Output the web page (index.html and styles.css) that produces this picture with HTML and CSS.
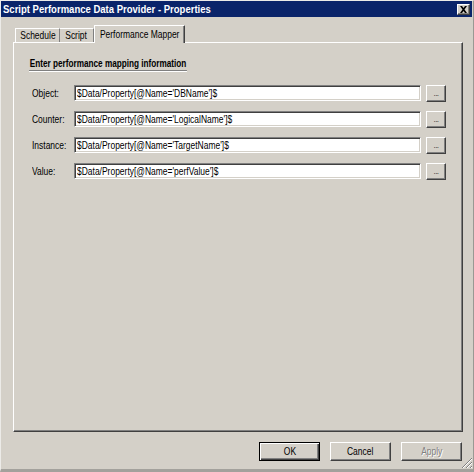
FILE: index.html
```html
<!DOCTYPE html>
<html>
<head>
<meta charset="utf-8">
<title>Script Performance Data Provider - Properties</title>
<link rel="stylesheet" href="styles.css">
</head>
<body>
<div class="window">
  <div class="titlebar">
    <span class="t title">Script Performance Data Provider - Properties</span>
    <span class="close">
      <svg width="9" height="7" viewBox="0 0 9 7"><path d="M1 0h2l1.5 2 1.5-2h2l-2.5 3.5 2.5 3.5h-2l-1.5-2-1.5 2h-2l2.5-3.5z" fill="#000"/></svg>
    </span>
  </div>
  <div class="body">
    <div class="tabs">
      <div class="tab tab-schedule"><span class="t tc">Schedule</span></div>
      <div class="tab tab-script"><span class="t tc">Script</span></div>
      <div class="tab tab-mapper active"><span class="t tc">Performance Mapper</span></div>
    </div>
    <div class="panel">
      <div class="heading-wrap"><span class="t heading">Enter performance mapping information</span></div>
      <div class="rows">
        <span class="label"><span class="t">Object:</span></span>
        <div class="input"><span class="t">$Data/Property[@Name='DBName']$</span></div>
        <div class="btn dots">...</div>

        <span class="label"><span class="t">Counter:</span></span>
        <div class="input"><span class="t">$Data/Property[@Name='LogicalName']$</span></div>
        <div class="btn dots">...</div>

        <span class="label"><span class="t">Instance:</span></span>
        <div class="input"><span class="t">$Data/Property[@Name='TargetName']$</span></div>
        <div class="btn dots">...</div>

        <span class="label"><span class="t">Value:</span></span>
        <div class="input"><span class="t">$Data/Property[@Name='perfValue']$</span></div>
        <div class="btn dots">...</div>
      </div>
    </div>
    <div class="footer">
      <div class="btn push default"><span class="t tc">OK</span></div>
      <div class="btn push"><span class="t tc">Cancel</span></div>
      <div class="btn push disabled"><span class="t tc">Apply</span></div>
    </div>
  </div>
  <svg class="grip" width="12" height="12" viewBox="0 0 12 12">
    <path d="M11 1L1 11M11 5L5 11M11 9L9 11" stroke="#808080" stroke-width="1"/>
    <path d="M11 2L2 11M11 6L6 11M11 10L10 11" stroke="#ffffff" stroke-width="1"/>
  </svg>
</div>
</body>
</html>
```

FILE: styles.css
```css
* { box-sizing: border-box; }
html, body { margin: 0; padding: 0; }
body {
  background: #D4D0C8;
  font-family: "Liberation Sans", Arial, sans-serif;
  font-size: 11px;
  color: #000;
}
.t {
  display: inline-block;
  white-space: nowrap;
  transform: scaleX(0.77);
  transform-origin: 0 50%;
}
.t.tc { transform-origin: 50% 50%; }
.window {
  position: relative;
  width: 474px;
  height: 472px;
  background: #D4D0C8;
  border-top: 1px solid #ecebe8;
  border-left: 1px solid #ecebe8;
  border-right: 1px solid #9a9893;
  border-bottom: 3px solid #a3a19c;
  display: flex;
  flex-direction: column;
}
.titlebar {
  height: 16px;
  margin-right: 1px;
  background: #0A246A;
  display: flex;
  align-items: center;
  justify-content: space-between;
  padding: 0 2px 0 2px;
}
.title {
  color: #fff;
  font-weight: bold;
  line-height: 16px;
  transform: scaleX(0.865);
}
.close {
  width: 13px;
  height: 11px;
  background: #D4D0C8;
  border: 1px solid;
  border-color: #fff #404040 #404040 #fff;
  box-shadow: inset -1px -1px 0 #808080;
  display: flex;
  align-items: center;
  justify-content: center;
}
.close svg { display: block; }
.body {
  flex: 1;
  display: flex;
  flex-direction: column;
  padding: 8px 10px 8px 12px;
}
.tabs {
  height: 17px;
  display: flex;
  align-items: flex-end;
  padding-left: 2px;
}
.tab {
  height: 14px;
  line-height: 13px;
  display: flex;
  justify-content: center;
  border-top: 1px solid #fff;
  border-right: 1px solid #808080;
}
.tab-schedule { width: 45px; border-left: 1px solid #fff; }
.tab-script { width: 34px; }
.tab.active {
  position: relative;
  z-index: 1;
  width: 91px;
  height: 18px;
  margin-bottom: -1px;
  padding-top: 2px;
  border-left: 1px solid #fff;
  border-right: 1px solid #404040;
  box-shadow: inset -1px 0 0 #808080;
  background: #D4D0C8;
}
.panel {
  flex: 1;
  border: 1px solid;
  border-color: #fff #404040 #404040 #fff;
  box-shadow: inset -1px -1px 0 #808080;
  padding: 13px 16px 0 16px;
}
.heading-wrap { height: 16px; }
.heading {
  font-weight: bold;
  line-height: 14px;
  border-bottom: 1px solid #808080;
  box-shadow: 0 1px 0 #fff;
  padding: 0 1px;
  margin-left: -1px;
  transform: scaleX(0.745);
}
.rows {
  margin-top: 13px;
  display: grid;
  grid-template-columns: 39px 347px 20px;
  column-gap: 5px;
  row-gap: 9px;
  align-items: center;
}
.label {
  padding-left: 2px;
  line-height: 17px;
  white-space: nowrap;
}
.input {
  height: 16px;
  background: #fff;
  border: 1px solid;
  border-color: #808080 #fff #fff #808080;
  box-shadow: inset 1px 1px 0 #404040, inset -1px -1px 0 #D4D0C8;
  padding-left: 2px;
  line-height: 14px;
  white-space: nowrap;
  overflow: hidden;
  align-self: start;
}
.btn {
  background: #D4D0C8;
  border: 1px solid;
  border-color: #fff #404040 #404040 #fff;
  box-shadow: inset -1px -1px 0 #808080;
  text-align: center;
}
.dots {
  height: 17px;
  font-size: 8px;
  line-height: 15px;
  letter-spacing: -0.5px;
  color: #202020;
}
.footer {
  margin-top: 10px;
  display: flex;
  justify-content: flex-end;
  gap: 10px;
  padding-right: 1px;
}
.push {
  width: 61px;
  height: 19px;
  line-height: 17px;
  display: flex;
  justify-content: center;
}
.push.default {
  border: 1px solid #000;
  box-shadow: inset 1px 1px 0 #fff, inset -1px -1px 0 #404040, inset -2px -2px 0 #808080;
}
.push.disabled {
  color: #808080;
  text-shadow: 1px 1px 0 #fff;
}
.grip {
  position: absolute;
  right: 0;
  bottom: 0;
}
```
